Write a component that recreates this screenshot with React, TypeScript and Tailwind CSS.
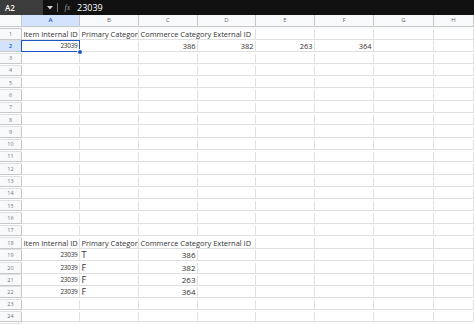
import React from "react";

const cols = ["A", "B", "C", "D", "E", "F", "G", "H"];
const gridCols = "grid grid-cols-[22px_58px_59px_59px_58px_59px_59px_60px_1fr]";

type Cell = { text?: string; align?: "r" | "l"; span?: number; cls?: string };

const emptyRow = (): Cell[] => Array.from({ length: 9 }, () => ({}));

function buildRows(): Cell[][] {
  const rows: Cell[][] = [];
  for (let i = 1; i <= 24; i++) {
    rows.push(emptyRow());
  }
  const header: Cell[] = [
    { text: "Item Internal ID" },
    { text: "Primary Category" },
    { text: "Commerce Category External ID", span: 2 },
    {},
    {},
    {},
    {},
    {},
  ];
  rows[0] = [{}, ...header];
  rows[17] = [{}, ...header];
  rows[1] = [
    {},
    { text: "23039", align: "r", cls: "text-[6.5px] tracking-[-0.3px]" },
    {},
    { text: "386", align: "r" },
    { text: "382", align: "r" },
    { text: "263", align: "r" },
    { text: "364", align: "r" },
    {},
    {},
  ];
  const data: [string, string][] = [
    ["T", "386"],
    ["F", "382"],
    ["F", "263"],
    ["F", "364"],
  ];
  data.forEach(([b, c], i) => {
    rows[18 + i] = [
      {},
      { text: "23039", align: "r", cls: "text-[6.5px] tracking-[-0.3px]" },
      { text: b, cls: "text-[9px]" },
      { text: c, align: "r", cls: "text-[8px]" },
      {},
      {},
      {},
      {},
      {},
    ];
  });
  return rows;
}

export default function App() {
  const rows = buildRows();
  return (
    <div
      className="w-[474px] h-[325px] overflow-hidden bg-white text-[#333]"
      style={{ fontFamily: '"Open Sans", "Liberation Sans", sans-serif' }}
    >
      {/* formula bar */}
      <div className="h-[15px] bg-[#111111] flex items-center">
        <div className="w-[43px] h-full bg-[#3c3c3c] flex items-center pl-[5px] text-white text-[8px] font-semibold">
          A2
        </div>
        <div className="w-[14px] flex items-center justify-center">
          <svg width="6" height="4" viewBox="0 0 6 4">
            <path d="M0 0 L6 0 L3 3.5 Z" fill="#d0d0d0" />
          </svg>
        </div>
        <div className="w-px h-[9px] bg-[#777]" />
        <div
          className="w-[19px] text-center text-[#9a9a9a] italic text-[8px]"
          style={{ fontFamily: '"Liberation Serif", serif' }}
        >
          fx
        </div>
        <div className="text-white text-[9px]">23039</div>
      </div>
      {/* column header */}
      <div className={`${gridCols} h-[14px] bg-[#f8f9fa]`}>
        <div className="border-r border-b border-[#c8c8c8] bg-[#f8f9fa]" />
        {cols.map((c) => (
          <div
            key={c}
            className={`flex items-center justify-center text-[6px] border-r border-b border-[#c8c8c8] ${
              c === "A" ? "bg-[#d3e3fd] text-[#0b57d0] font-semibold" : "text-[#666]"
            }`}
          >
            {c}
          </div>
        ))}
        <div className="border-b border-[#c8c8c8]" />
      </div>
      {/* rows */}
      {rows.map((row, ri) => {
        const n = ri + 1;
        const cells: React.ReactNode[] = [];
        let skip = 0;
        row.slice(1).forEach((cell, ci) => {
          if (skip > 0) {
            skip--;
            return;
          }
          if (ci >= 8) return;
          const span = cell.span || 1;
          if (span > 1) skip = span - 1;
          const active = n === 2 && ci === 0;
          cells.push(
            <div
              key={ci}
              className={`relative h-full flex items-center border-r border-b border-[#e0e0e0] ${
                span === 2 ? "col-span-2" : ""
              }`}
            >
              <div
                className={`w-full overflow-hidden whitespace-nowrap px-[1.5px] leading-[10px] ${
                  cell.align === "r" ? "text-right" : "text-left"
                } ${cell.cls || "text-[7.45px]"}`}
              >
                {cell.text}
              </div>
              {active && (
                <>
                  <div className="absolute -left-px -top-px -right-px -bottom-px border-[1.5px] border-[#1a56c4] pointer-events-none" />
                  <div className="absolute -right-[3.5px] -bottom-[3.5px] w-[6px] h-[6px] rounded-full bg-[#1a56c4] border border-white z-10" />
                </>
              )}
            </div>
          );
        });
        return (
          <div key={ri} className={`${gridCols} h-[12.3px]`}>
            <div
              className={`flex items-center justify-center text-[5.5px] border-r border-b border-[#c8c8c8] ${
                n === 2 ? "bg-[#d3e3fd] text-[#0b57d0] font-semibold" : "bg-[#f8f9fa] text-[#777]"
              }`}
            >
              {n}
            </div>
            {cells}
            <div className="border-b border-[#e0e0e0]" />
          </div>
        );
      })}
    </div>
  );
}
